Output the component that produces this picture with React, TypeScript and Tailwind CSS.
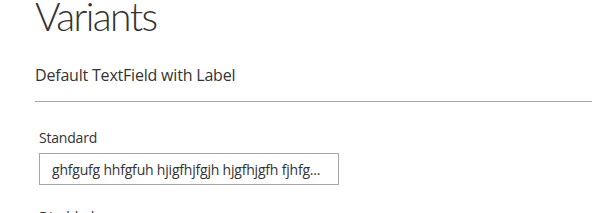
import React from "react";

export default function App() {
  return (
    <div className="w-[592px] h-[213px] overflow-hidden bg-white pl-[35px] font-['Open_Sans','Noto_Sans',sans-serif] text-[#333333]">
      <h1 className="font-['Lato','Open_Sans',sans-serif] text-[39px] leading-[33px] font-light tracking-[-1.6px]">Variants</h1>
      <h2 className="mt-[34px] text-[16px] leading-[17px] font-normal tracking-[-0.2px]">Default TextField with Label</h2>
      <div className="mt-[17px] h-px bg-[#a6a6a6]" />
      <div className="pl-[4px] pt-[26px]">
        <label className="block text-[14px] leading-[20px] tracking-[-0.2px]">Standard</label>
        <input
          readOnly
          value="ghfgufg hhfgfuh hjigfhjfgjh hjgfhjgfh fjhfg..."
          className="mt-[5px] block h-[32px] w-[300px] border border-[#a6a6a6] bg-white pl-[12px] pr-2 text-[14px] text-[#333333] tracking-[-0.2px] outline-none font-['Open_Sans','Noto_Sans',sans-serif]"
        />
        <label className="mt-[22px] block text-[14px] leading-[20px] tracking-[-0.2px]">Disabled</label>
      </div>
    </div>
  );
}
